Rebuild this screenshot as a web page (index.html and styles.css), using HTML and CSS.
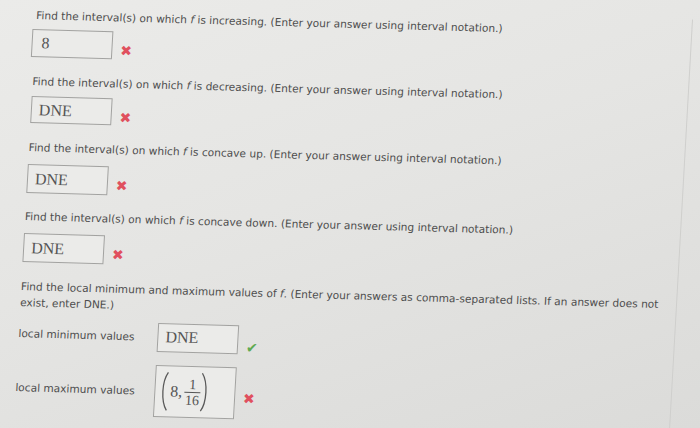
FILE: index.html
```html
<!DOCTYPE html>
<html>
<head>
<meta charset="utf-8">
<link rel="stylesheet" href="styles.css">
</head>
<body>
<div class="screen">
  <div class="panel">
    <div class="q q1">
      <p class="prompt">Find the interval(s) on which <i>f</i> is increasing. (Enter your answer using interval notation.)</p>
      <div class="answer a1"><span class="box b1">8</span><span class="mark wrong">&#10006;</span></div>
    </div>
    <div class="q q2">
      <p class="prompt">Find the interval(s) on which <i>f</i> is decreasing. (Enter your answer using interval notation.)</p>
      <div class="answer a2"><span class="box b2">DNE</span><span class="mark wrong">&#10006;</span></div>
    </div>
    <div class="q q3">
      <p class="prompt">Find the interval(s) on which <i>f</i> is concave up. (Enter your answer using interval notation.)</p>
      <div class="answer a3"><span class="box b3">DNE</span><span class="mark wrong">&#10006;</span></div>
    </div>
    <div class="q q4">
      <p class="prompt">Find the interval(s) on which <i>f</i> is concave down. (Enter your answer using interval notation.)</p>
      <div class="answer a4"><span class="box b4">DNE</span><span class="mark wrong">&#10006;</span></div>
    </div>
    <div class="q q5">
      <p class="prompt wide">Find the local minimum and maximum values of <i>f</i>. (Enter your answers as comma-separated lists. If an answer does not exist, enter DNE.)</p>
      <div class="row rmin">
        <span class="label">local minimum values</span>
        <span class="box b5">DNE</span><span class="mark right">&#10004;</span>
      </div>
      <div class="row rmax">
        <span class="label">local maximum values</span>
        <span class="box b6">
          <svg class="paren" width="8" height="40" viewBox="0 0 8 40"><path d="M7 1 C1 10 1 30 7 39" fill="none" stroke="#5a5a5a" stroke-width="1.3"/></svg>
          <span class="num">8,</span>
          <span class="frac"><span class="top">1</span><span class="bot">16</span></span>
          <svg class="paren" width="8" height="40" viewBox="0 0 8 40"><path d="M1 1 C7 10 7 30 1 39" fill="none" stroke="#5a5a5a" stroke-width="1.3"/></svg>
        </span><span class="mark wrong">&#10006;</span>
      </div>
    </div>
  </div>
</div>
</body>
</html>
```

FILE: styles.css
```css
html, body {
  margin: 0;
  padding: 0;
  width: 700px;
  height: 428px;
  overflow: hidden;
}
body {
  background: linear-gradient(160deg, #ebebe9 0%, #e5e5e3 45%, #dbdbd9 100%);
  font-family: "DejaVu Sans", Verdana, sans-serif;
  color: #4d4d4d;
}
.screen {
  width: 700px;
  height: 428px;
  overflow: hidden;
}
.panel {
  width: 655px;
  height: 460px;
  padding: 7px 0 0 37px;
  box-sizing: content-box;
  border-right: 1px solid #cfcfcd;
  transform-origin: 0 0;
  transform: matrix(1, 0.028, -0.056, 1, 0, 0);
}
.prompt {
  margin: 0;
  font-size: 10.6px;
  line-height: 14px;
}
.prompt.wide {
  width: 648px;
  line-height: 16px;
}
i {
  font-style: italic;
}
.answer {
  display: flex;
  align-items: flex-start;
}
.a1 { margin-top: 7px; }
.a2 { margin-top: 8px; }
.a3 { margin-top: 10px; }
.a4 { margin-top: 10px; }
.box {
  display: flex;
  align-items: center;
  box-sizing: border-box;
  width: 81px;
  height: 29px;
  padding-left: 7px;
  border: 1px solid #a2a2a0;
  background: #ebebe9;
  font-family: "Liberation Serif", "Times New Roman", serif;
  font-size: 16px;
  color: #555;
}
.b1 { margin-left: -3px; height: 28px; padding-left: 9px; }
.b2 { height: 27px; }
.mark {
  font-size: 14px;
  line-height: 14px;
  margin-left: 8px;
  margin-top: 12px;
}
.wrong { color: #e0505e; }
.right { color: #5faa52; font-size: 14px; }
.q2 { margin-top: 17px; }
.q3 { margin-top: 17px; }
.q4 { margin-top: 16px; }
.q5 { margin-top: 16px; }
.row {
  display: flex;
  align-items: center;
}
.label {
  width: 139px;
  font-size: 10.6px;
}
.rmin { margin-top: 8px; }
.rmin .mark { margin-top: 16px; }
.rmax { margin-top: 13px; }
.rmax .mark { margin-top: 10px; }
.b6 {
  height: 52px;
  padding-left: 5px;
}
.paren {
  display: block;
  flex: none;
}
.num { font-size: 16px; margin: 0 3px 0 2px; }
.frac {
  display: inline-flex;
  flex-direction: column;
  align-items: center;
  font-size: 14px;
  line-height: 15px;
  margin-right: 1px;
}
.frac .top {
  border-bottom: 1px solid #555;
  padding: 0 1px;
  width: 100%;
  text-align: center;
}
```
